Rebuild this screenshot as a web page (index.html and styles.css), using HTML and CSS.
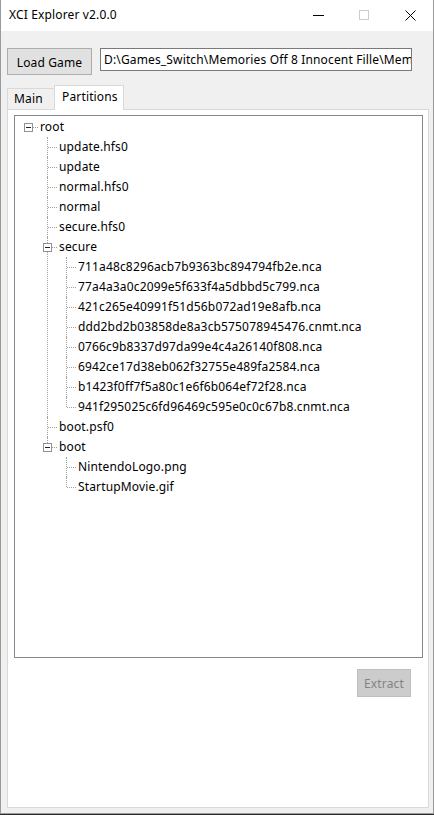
FILE: index.html
```html
<!DOCTYPE html>
<html>
<head>
<meta charset="utf-8">
<link rel="stylesheet" href="styles.css">
</head>
<body>
<div class="window">
  <div class="titlebar">
    <span class="title">XCI Explorer v2.0.0</span>
    <div class="controls">
      <span class="ctl"><svg width="11" height="1" viewBox="0 0 11 1"><rect width="11" height="1" fill="#000"/></svg></span>
      <span class="ctl"><svg width="10" height="10" viewBox="0 0 10 10"><rect x="0.5" y="0.5" width="9" height="9" fill="none" stroke="#cccccc"/></svg></span>
      <span class="ctl"><svg width="11" height="11" viewBox="0 0 11 11"><path d="M0.5 0.5 L10.5 10.5 M10.5 0.5 L0.5 10.5" stroke="#000" stroke-width="1"/></svg></span>
    </div>
  </div>
  <div class="client">
    <div class="toprow">
      <button class="btn load">Load Game</button>
      <div class="path">D:\Games_Switch\Memories Off 8 Innocent Fille\Memories Off 8 Innocent Fille.xci</div>
    </div>
    <div class="tabs">
      <div class="tab">Main</div>
      <div class="tab active">Partitions</div>
    </div>
    <div class="panel">
      <div class="tree">
        <ul>
          <li class="root last">
            <div class="row"><span class="box"></span>root</div>
            <ul>
              <li><div class="row">update.hfs0</div></li>
              <li><div class="row">update</div></li>
              <li><div class="row">normal.hfs0</div></li>
              <li><div class="row">normal</div></li>
              <li><div class="row">secure.hfs0</div></li>
              <li>
                <div class="row"><span class="box"></span>secure</div>
                <ul>
                  <li><div class="row">711a48c8296acb7b9363bc894794fb2e.nca</div></li>
                  <li><div class="row">77a4a3a0c2099e5f633f4a5dbbd5c799.nca</div></li>
                  <li><div class="row">421c265e40991f51d56b072ad19e8afb.nca</div></li>
                  <li><div class="row">ddd2bd2b03858de8a3cb575078945476.cnmt.nca</div></li>
                  <li><div class="row">0766c9b8337d97da99e4c4a26140f808.nca</div></li>
                  <li><div class="row">6942ce17d38eb062f32755e489fa2584.nca</div></li>
                  <li><div class="row">b1423f0ff7f5a80c1e6f6b064ef72f28.nca</div></li>
                  <li class="last"><div class="row">941f295025c6fd96469c595e0c0c67b8.cnmt.nca</div></li>
                </ul>
              </li>
              <li><div class="row">boot.psf0</div></li>
              <li class="last">
                <div class="row"><span class="box"></span>boot</div>
                <ul>
                  <li><div class="row">NintendoLogo.png</div></li>
                  <li class="last"><div class="row">StartupMovie.gif</div></li>
                </ul>
              </li>
            </ul>
          </li>
        </ul>
      </div>
      <div class="actions">
        <button class="btn extract" disabled>Extract</button>
      </div>
    </div>
  </div>
</div>
</body>
</html>
```
FILE: styles.css
```css
* { box-sizing: border-box; }
html, body { margin: 0; padding: 0; }
body {
  width: 434px;
  height: 815px;
  background: #2b2b2b;
  font-family: "Noto Sans", "Liberation Sans", sans-serif;
  font-size: 12px;
  letter-spacing: 0.15px;
  color: #000;
  overflow: hidden;
}
.window {
  width: 434px;
  height: 814px;
  display: flex;
  flex-direction: column;
  border-left: 1px solid #9a9a9a;
  border-right: 1px solid #9a9a9a;
  border-bottom: 1px solid #9a9a9a;
  background: #f0f0f0;
}
.titlebar {
  height: 31px;
  background: #fff;
  display: flex;
  align-items: center;
  flex-shrink: 0;
}
.title {
  padding-left: 8px;
  flex: 1;
  line-height: 16px;
  padding-bottom: 1px;
}
.controls { display: flex; height: 31px; }
.ctl {
  width: 46px;
  height: 31px;
  display: flex;
  align-items: center;
  justify-content: center;
  padding-bottom: 1px;
}
.ctl svg { display: block; }
.client {
  flex: 1;
  display: flex;
  flex-direction: column;
  padding: 17px 4px 5px 6px;
  min-height: 0;
}
.toprow {
  display: flex;
  align-items: flex-start;
  gap: 8px;
  height: 27px;
}
.btn {
  font-family: inherit;
  font-size: 12px;
  letter-spacing: 0.15px;
  margin: 0;
  padding: 0;
  border-radius: 0;
}
.load {
  width: 85px;
  height: 27px;
  background: #e1e1e1;
  border: 1px solid #adadad;
  color: #000;
  padding-top: 1px;
}
.path {
  width: 312px;
  height: 23px;
  border: 1px solid #7a7a7a;
  background: #fff;
  line-height: 21px;
  padding-left: 3px;
  white-space: nowrap;
  overflow: hidden;
  text-overflow: clip;
}
.tabs {
  display: flex;
  align-items: flex-end;
  margin-top: 10px;
  height: 24px;
  position: relative;
  z-index: 1;
}
.tab {
  height: 21px;
  border: 1px solid #d9d9d9;
  border-bottom: none;
  background: #f0f0f0;
  line-height: 20px;
  padding: 0 0 0 6px;
  width: 48px;
}
.tab.active {
  height: 25px;
  width: 70px;
  margin-left: -1px;
  margin-bottom: -1px;
  background: #fff;
  padding-left: 7px;
  line-height: 22px;
}
.panel {
  flex: 1;
  border: 1px solid #d9d9d9;
  background: #fff;
  display: flex;
  flex-direction: column;
  padding: 5px 5px 0 6px;
  min-height: 0;
}
.tree {
  height: 543px;
  border: 1px solid #828790;
  background: #fff;
  padding-top: 1px;
  overflow: hidden;
}
.tree ul {
  list-style: none;
  margin: 0;
  padding: 0 0 0 19px;
}
.tree > ul { padding-left: 0; }
.tree li { position: relative; }
.tree li::before {
  content: "";
  position: absolute;
  left: 13px;
  top: 0;
  bottom: 0;
  border-left: 1px dotted #a0a0a0;
}
.tree li.last::before { bottom: auto; height: 10px; }
.tree li.root::before { display: none; }
.row {
  position: relative;
  height: 20px;
  line-height: 20px;
  padding-left: 25px;
  white-space: nowrap;
}
.row::before {
  content: "";
  position: absolute;
  left: 14px;
  top: 10px;
  width: 9px;
  border-top: 1px dotted #a0a0a0;
}
.box {
  position: absolute;
  left: 9px;
  top: 6px;
  width: 9px;
  height: 9px;
  border: 1px solid #919191;
  background: #fff;
  z-index: 1;
}
.box::after {
  content: "";
  position: absolute;
  left: 1px;
  top: 3px;
  width: 5px;
  height: 1px;
  background: #222;
}
.actions {
  display: flex;
  justify-content: flex-end;
  padding: 11px 12px 0 0;
}
.extract {
  width: 54px;
  height: 28px;
  background: #cccccc;
  border: 1px solid #bfbfbf;
  color: #838383;
  padding-top: 1px;
}
```
